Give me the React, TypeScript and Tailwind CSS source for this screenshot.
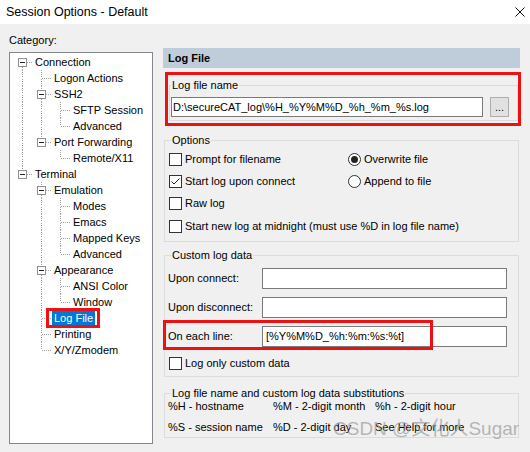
import React from "react";

type TreeNode = {
  label: string;
  level: number;
  guides: boolean[];
  last: boolean;
  open?: boolean;
  first?: boolean;
  selected?: boolean;
};

const tree: TreeNode[] = [
  { label: "Connection", level: 0, guides: [], last: false, open: true, first: true },
  { label: "Logon Actions", level: 1, guides: [true], last: false },
  { label: "SSH2", level: 1, guides: [true], last: false, open: true },
  { label: "SFTP Session", level: 2, guides: [true, true], last: false },
  { label: "Advanced", level: 2, guides: [true, true], last: true },
  { label: "Port Forwarding", level: 1, guides: [true], last: true, open: true },
  { label: "Remote/X11", level: 2, guides: [true, false], last: true },
  { label: "Terminal", level: 0, guides: [], last: true, open: true },
  { label: "Emulation", level: 1, guides: [false], last: false, open: true },
  { label: "Modes", level: 2, guides: [false, true], last: false },
  { label: "Emacs", level: 2, guides: [false, true], last: false },
  { label: "Mapped Keys", level: 2, guides: [false, true], last: false },
  { label: "Advanced", level: 2, guides: [false, true], last: true },
  { label: "Appearance", level: 1, guides: [false], last: false, open: true },
  { label: "ANSI Color", level: 2, guides: [false, true], last: false },
  { label: "Window", level: 2, guides: [false, true], last: true },
  { label: "Log File", level: 1, guides: [false], last: false, selected: true },
  { label: "Printing", level: 1, guides: [false], last: false },
  { label: "X/Y/Zmodem", level: 1, guides: [false], last: true },
];

const dot = { stroke: "#a0a0a0", strokeDasharray: "1 1", strokeWidth: 1 };

// one 19x16 slot of the tree's dotted guide lines
function Guide({ up, down, right, box }: { up?: boolean; down?: boolean; right?: boolean; box?: boolean }) {
  return (
    <svg width="19" height="16" className="shrink-0">
      {up && <line x1="9.5" y1="0" x2="9.5" y2={box ? 4 : 8} {...dot} />}
      {down && <line x1="9.5" y1={box ? 13 : 9} x2="9.5" y2="16" {...dot} />}
      {right && <line x1={box ? 14 : 10} y1="8.5" x2="19" y2="8.5" {...dot} />}
      {box && (
        <>
          <rect x="5.5" y="4.5" width="8" height="8" fill="#fff" stroke="#919191" />
          <rect x="7" y="8" width="5" height="1" fill="#222" />
        </>
      )}
    </svg>
  );
}

function TreeRow({ node }: { node: TreeNode }) {
  return (
    <div className="flex h-4 items-center pl-[3px]">
      {node.guides.map((g, i) => (
        <Guide key={i} up={g} down={g} />
      ))}
      <Guide up={!node.first} down={!node.last} right box={node.open} />
      {node.selected ? (
        <span className="-ml-[5px] flex h-[20px] items-center border-[3px] border-[#ee1111] pr-[2px] pl-[3px]">
          <span className="flex h-[14px] items-center bg-[#0078d7] px-[2px] text-white">{node.label}</span>
        </span>
      ) : (
        <span className="ml-[1px] px-[2px] leading-4 whitespace-nowrap">{node.label}</span>
      )}
    </div>
  );
}

function Check({ on }: { on?: boolean }) {
  return (
    <span className="flex h-[13px] w-[13px] shrink-0 items-center justify-center border border-[#333] bg-white">
      {on && (
        <svg width="11" height="11" viewBox="0 0 11 11">
          <path d="M1.5 5.5 L4 8 L9.5 2.5" fill="none" stroke="#222" strokeWidth="1" />
        </svg>
      )}
    </span>
  );
}

function Radio({ on }: { on?: boolean }) {
  return (
    <span className="flex h-[13px] w-[13px] shrink-0 items-center justify-center rounded-full border border-[#333] bg-white">
      {on && <span className="h-[7px] w-[7px] rounded-full bg-[#222]" />}
    </span>
  );
}

function Field({ label, value }: { label: string; value?: string }) {
  return (
    <div className="flex items-center">
      <span className="w-[94px]">{label}</span>
      <div className="flex h-[21px] w-[245px] items-center border border-[#7a7a7a] bg-white pl-[3px]">{value}</div>
    </div>
  );
}

export default function App() {
  return (
    <div className="relative h-[452px] w-[530px] overflow-hidden bg-[#f0f0f0] font-['Liberation_Sans',Arial,sans-serif] text-[11px] text-black">
      {/* title bar */}
      <div className="flex h-[24px] items-center justify-between bg-white pr-[5px] pl-[6px] text-[12.5px]">
        <span>Session Options - Default</span>
        <svg width="10" height="10" viewBox="0 0 10 10">
          <path d="M0.5 0.5 L9.5 9.5 M9.5 0.5 L0.5 9.5" stroke="#111" strokeWidth="1" />
        </svg>
      </div>

      <div className="flex">
        {/* category tree */}
        <div className="w-[153px] shrink-0 pt-[8px] pl-[9px]">
          <div className="h-4 leading-4">Category:</div>
          <div className="mt-[4px] h-[392px] border border-[#828790] bg-white pt-[1px]">
            {tree.map((n, i) => (
              <TreeRow key={i} node={n} />
            ))}
          </div>
        </div>

        {/* log file page */}
        <div className="ml-[10px] w-[357px] pt-[24px]">
          <div className="flex h-[20px] items-center bg-[#bfcddb] pl-[5px] font-bold">Log File</div>

          <div className="mt-[4px] ml-[2px] h-[54px] w-[356px] border-[3px] border-[#ee1111]">
            <fieldset className="mt-[2px] ml-[1px] w-[349px] border border-[#dcdcdc]">
              <legend className="ml-[1px] px-[1px] leading-4">Log file name</legend>
              <div className="mt-[4px] flex items-center pb-[3px] pl-[1px]">
                <div className="flex h-[20px] w-[312px] items-center border border-[#7a7a7a] bg-white pl-[1px]">
                  D:\secureCAT_log\%H_%Y%M%D_%h_%m_%s.log
                </div>
                <div className="ml-[7px] flex h-[20px] w-[19px] items-center justify-center border border-[#adadad] bg-[#e1e1e1]">
                  ...
                </div>
              </div>
            </fieldset>
          </div>

          <fieldset className="mt-[6px] ml-[1px] w-[355px] border border-[#dcdcdc] pb-[3px]">
            <legend className="ml-[6px] px-[1px] leading-4">Options</legend>
            <div className="pl-[4px]">
              <div className="flex h-[22px] items-center">
                <div className="flex w-[179px] items-center gap-[3px]">
                  <Check />
                  <span>Prompt for filename</span>
                </div>
                <div className="flex items-center gap-[3px]">
                  <Radio on />
                  <span>Overwrite file</span>
                </div>
              </div>
              <div className="flex h-[22px] items-center">
                <div className="flex w-[179px] items-center gap-[3px]">
                  <Check on />
                  <span>Start log upon connect</span>
                </div>
                <div className="flex items-center gap-[3px]">
                  <Radio />
                  <span>Append to file</span>
                </div>
              </div>
              <div className="flex h-[23px] items-center gap-[3px]">
                <Check />
                <span>Raw log</span>
              </div>
              <div className="flex h-[23px] items-center gap-[3px]">
                <Check />
                <span>Start new log at midnight (must use %D in log file name)</span>
              </div>
            </div>
          </fieldset>

          <fieldset className="mt-[5px] ml-[1px] w-[355px] border border-[#dcdcdc] pb-[5px]">
            <legend className="ml-[6px] px-[1px] leading-4">Custom log data</legend>
            <div className="mt-[5px] flex flex-col gap-[8px] pl-[3px]">
              <Field label="Upon connect:" />
              <Field label="Upon disconnect:" />
              <Field label="On each line:" value="[%Y%M%D_%h:%m:%s:%t]" />
            </div>
            <div className="mt-[8px] flex h-4 items-center gap-[3px] pl-[4px]">
              <Check />
              <span>Log only custom data</span>
            </div>
          </fieldset>

          <fieldset className="mt-[8px] ml-[1px] w-[355px] border border-[#dcdcdc] pb-[2px]">
            <legend className="ml-[6px] px-[1px] leading-4">Log file name and custom log data substitutions</legend>
            <div className="-mt-[3px] grid grid-cols-[105px_102px_1fr] gap-y-[5px] pl-[3px] leading-4">
              <span>%H - hostname</span>
              <span>%M - 2-digit month</span>
              <span>%h - 2-digit hour</span>
              <span>%S - session name</span>
              <span>%D - 2-digit day</span>
              <span>See Help for more</span>
            </div>
          </fieldset>
        </div>
      </div>

      {/* annotation box around "On each line" */}
      <div className="absolute top-[320px] left-[163px] h-[30px] w-[270px] border-[3px] border-[#ee1111]" />

      {/* watermark */}
      <div className="absolute top-[417px] left-[333px] font-['Liberation_Sans','Noto_Sans_CJK_SC',sans-serif] text-[19px] leading-[24px] whitespace-nowrap text-[#9a9a9a]/70">
        CSDN @文化人Sugar
      </div>
    </div>
  );
}
